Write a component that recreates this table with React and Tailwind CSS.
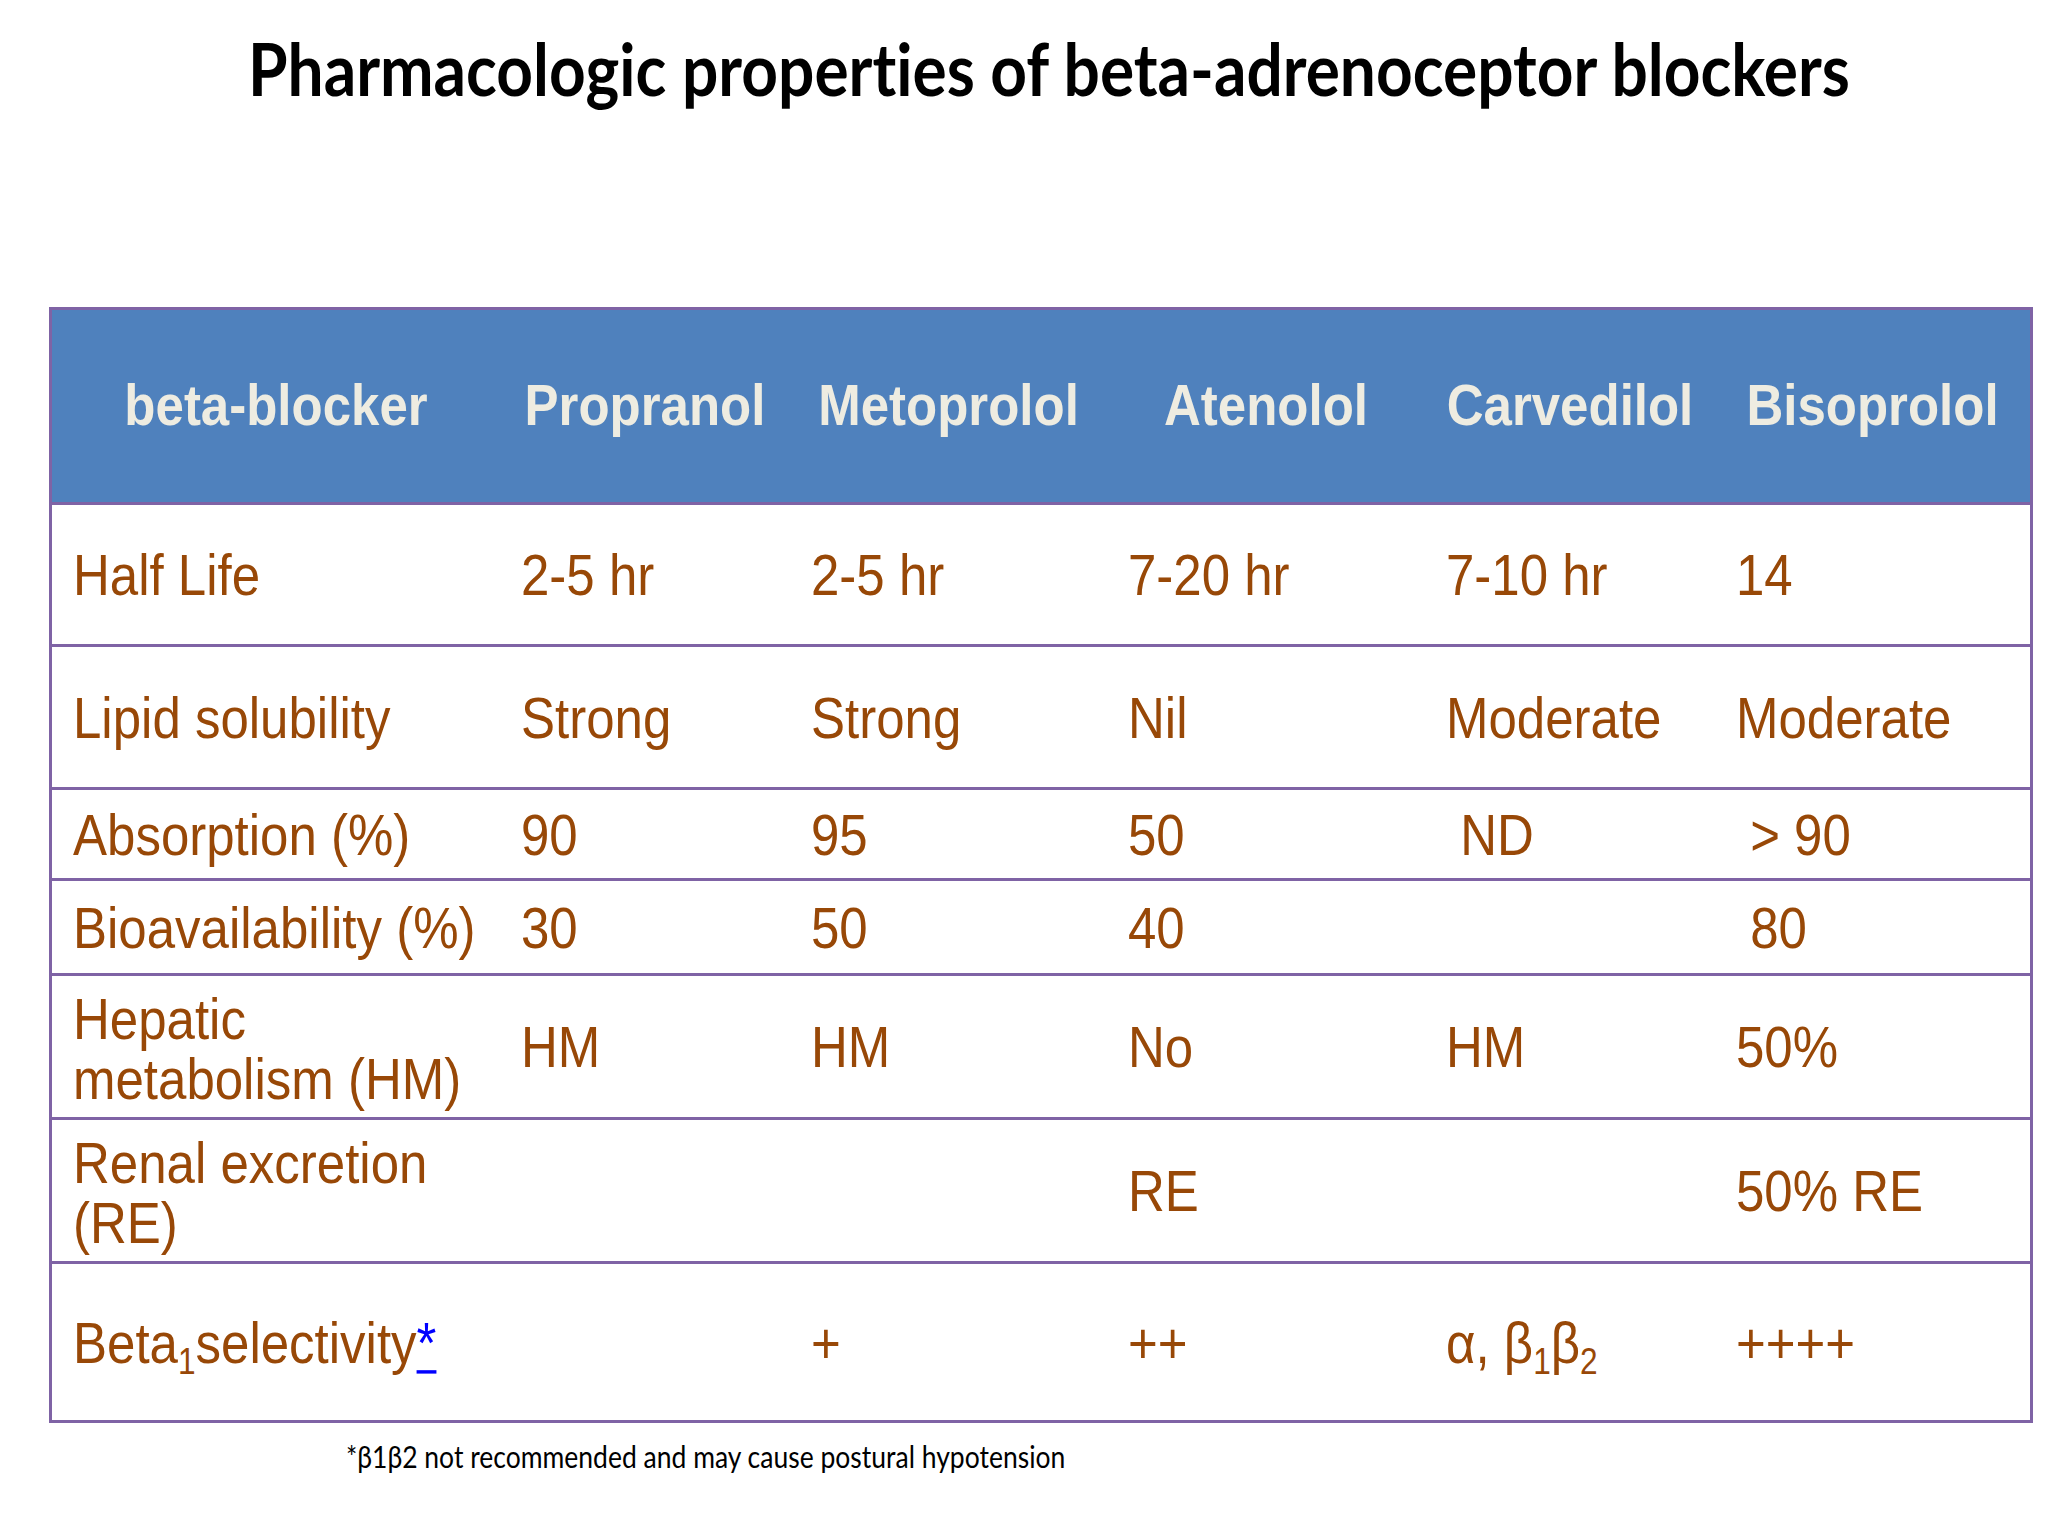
import React from "react";

const COLS = "grid grid-cols-[448px_290px_317px_318px_290px_315px]";
const BODY = "font-['Liberation_Sans',Arial,sans-serif] text-[51px] text-[#984807]";
const T = "inline-block origin-center scale-y-[1.14]";

const HEAD = ["beta-blocker", "Propranol", "Metoprolol", "Atenolol", "Carvedilol", "Bisoprolol"];

const Sub = ({ children }) => (
  <span className="relative top-[0.3em] text-[0.62em]">{children}</span>
);

const ROWS = [
  { h: "h-[142px]", cells: ["Half Life", "2-5 hr", "2-5 hr", "7-20 hr", "7-10 hr", "14"] },
  { h: "h-[143px]", cells: ["Lipid solubility", "Strong", "Strong", "Nil", "Moderate", "Moderate"] },
  { h: "h-[91px]", cells: ["Absorption (%)", "90", "95", "50", "\u00a0ND", "\u00a0> 90"] },
  { h: "h-[95px]", cells: ["Bioavailability (%)", "30", "50", "40", "", "\u00a080"] },
  { h: "h-[144px]", cells: [["Hepatic", "metabolism (HM)"], "HM", "HM", "No", "HM", "50%"] },
  { h: "h-[144px]", cells: [["Renal excretion", "(RE)"], "", "", "RE", "", "50% RE"] },
  {
    h: "h-[156px]",
    last: true,
    cells: [
      <>
        Beta<Sub>1</Sub>selectivity
        <span className="text-[#0000ff] underline decoration-[3px] underline-offset-[6px]">*</span>
      </>,
      "",
      "+",
      "++",
      <>
        α, β<Sub>1</Sub>β<Sub>2</Sub>
      </>,
      "++++",
    ],
  },
];

function Cell({ value }) {
  if (Array.isArray(value)) {
    return (
      <div className="flex items-center pl-[21px] pt-[4px]">
        <div className="origin-center scale-y-[1.14] leading-[53px]">
          {value.map((l) => (
            <div key={l}>{l}</div>
          ))}
        </div>
      </div>
    );
  }
  return (
    <div className="flex items-center pl-[21px] pt-[4px] whitespace-pre">
      <span className={T}>{value}</span>
    </div>
  );
}

export default function App() {
  return (
    <div className="w-[2048px] h-[1536px] bg-white">
      <h1 className="pt-[36px] pl-[50px] text-center font-['Lato',sans-serif] font-bold text-[64px] leading-[66px] text-black [font-variant-ligatures:none]">
        <span className={T}>Pharmacologic properties of beta-adrenoceptor blockers</span>
      </h1>

      <div className="mt-[205px] ml-[49px] w-[1984px] border-[3px] border-[#7f63a5]">
        <div className={`${COLS} h-[195px] bg-[#4f81bd] border-b-[3px] border-[#7f63a5]`}>
          {HEAD.map((h) => (
            <div key={h} className="flex items-center justify-center">
              <span className={`${T} font-['Liberation_Sans',Arial,sans-serif] font-bold text-[51px] text-[#eeece1]`}>
                {h}
              </span>
            </div>
          ))}
        </div>
        {ROWS.map((r, i) => (
          <div
            key={i}
            className={`${COLS} ${r.h} ${BODY} ${r.last ? "" : "border-b-[3px] border-[#7f63a5]"}`}
          >
            {r.cells.map((c, j) => (
              <Cell key={j} value={c} />
            ))}
          </div>
        ))}
      </div>

      <p className="mt-[15px] pl-[346px] font-['Lato',sans-serif] text-[26.5px] text-black [font-variant-ligatures:none]">
        <span className={T}>*β1β2 not recommended and may cause postural hypotension</span>
      </p>
    </div>
  );
}
